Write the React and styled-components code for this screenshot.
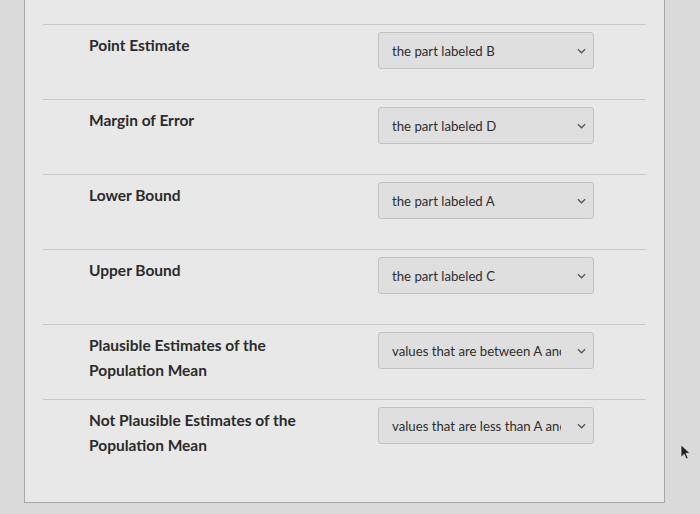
import React from "react";
import styled, { createGlobalStyle } from "styled-components";

const GlobalStyle = createGlobalStyle`
  html, body {
    margin: 0;
    padding: 0;
    background: #dadada;
    font-family: Lato, "Open Sans", "Liberation Sans", sans-serif;
  }
`;

const rows = [
  { label: ["Point Estimate"], value: "the part labeled B" },
  { label: ["Margin of Error"], value: "the part labeled D" },
  { label: ["Lower Bound"], value: "the part labeled A" },
  { label: ["Upper Bound"], value: "the part labeled C" },
  {
    label: ["Plausible Estimates of the", "Population Mean"],
    value: "values that are between A and C",
  },
  {
    label: ["Not Plausible Estimates of the", "Population Mean"],
    value: "values that are less than A and greater than C",
  },
];

export default function App() {
  return (
    <>
      <GlobalStyle />
      <Page>
        <Card>
          {rows.map((row, i) => (
            <Row key={i} $last={i === rows.length - 1}>
              <Label>
                {row.label.map((line) => (
                  <div key={line}>{line}</div>
                ))}
              </Label>
              <Select>
                <SelectText>{row.value}</SelectText>
                <Chevron viewBox="0 0 10 6">
                  <path d="M1 1l4 4 4-4" />
                </Chevron>
              </Select>
            </Row>
          ))}
        </Card>
        <Pointer viewBox="0 0 12 18">
          <path d="M1 1v14l3.5-3.5 2.5 5.5 2-1-2.5-5.5H11z" />
        </Pointer>
      </Page>
    </>
  );
}

const Page = styled.div`
  position: relative;
  width: 700px;
  height: 514px;
  overflow: hidden;
`;

const Card = styled.div`
  margin-left: 24px;
  width: 641px;
  height: 503px;
  box-sizing: border-box;
  padding: 24px 18px 0;
  background: #e8e8e8;
  border: 1px solid #a8a8a8;
  border-top: none;
`;

const Row = styled.div`
  display: grid;
  grid-template-columns: 335px 216px;
  height: ${(p) => (p.$last ? "102px" : "75px")};
  box-sizing: border-box;
  padding-top: 7px;
  border-top: 1px solid #c9c9c9;
`;

const Label = styled.div`
  padding-left: 46px;
  padding-top: 1px;
  font-size: 15.5px;
  font-weight: 700;
  line-height: 25px;
  color: #2b2b2b;
`;

const Select = styled.div`
  display: flex;
  align-items: center;
  height: 37px;
  box-sizing: border-box;
  padding: 0 7px 0 13px;
  background: #dfdfdf;
  border: 1px solid #c2c2c2;
  border-radius: 3px;
`;

const SelectText = styled.div`
  flex: 1;
  overflow: hidden;
  white-space: nowrap;
  font-size: 13.2px;
  color: #2e2e2e;
`;

const Chevron = styled.svg`
  width: 9px;
  height: 6px;
  margin-left: 16px;
  fill: none;
  stroke: #555;
  stroke-width: 1.4;
`;

const Pointer = styled.svg`
  position: absolute;
  left: 680px;
  top: 444px;
  width: 11px;
  height: 16px;
  fill: #222;
  stroke: #fff;
  stroke-width: 0.6;
`;
